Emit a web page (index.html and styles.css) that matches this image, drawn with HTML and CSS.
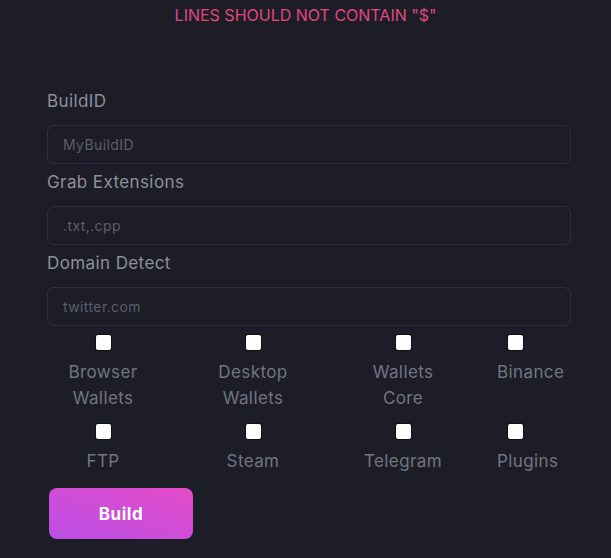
FILE: index.html
```html
<!DOCTYPE html>
<html lang="en">
  <head>
    <meta charset="UTF-8" />
    <title>Builder</title>
    <link rel="stylesheet" href="styles.css">
  </head>
  <body>
    <div class="panel">
      <p class="warn">LINES SHOULD NOT CONTAIN "$"</p>
      <form class="form">
        <label>BuildID</label>
        <input placeholder="MyBuildID" />
        <label>Grab Extensions</label>
        <input placeholder=".txt,.cpp" />
        <label>Domain Detect</label>
        <input placeholder="twitter.com" />

        <div class="checks">
          <div class="opt"><input type="checkbox" /><span>Browser<br>Wallets</span></div>
          <div class="opt"><input type="checkbox" /><span>Desktop<br>Wallets</span></div>
          <div class="opt"><input type="checkbox" /><span>Wallets<br>Core</span></div>
          <div class="opt last"><input type="checkbox" /><span>Binance</span></div>
          <div class="opt"><input type="checkbox" /><span>FTP</span></div>
          <div class="opt"><input type="checkbox" /><span>Steam</span></div>
          <div class="opt"><input type="checkbox" /><span>Telegram</span></div>
          <div class="opt last"><input type="checkbox" /><span>Plugins</span></div>
        </div>

        <button type="button">Build</button>
      </form>
    </div>
  </body>
</html>
```

FILE: styles.css
```css
body {
  margin: 0;
  background: #1d1d27;
  font-family: Inter, "Open Sans", sans-serif;
  color: #8d909b;
}
.panel {
  width: 611px;
  height: 558px;
  overflow: hidden;
}
.warn {
  margin: 4px 0 0;
  text-align: center;
  color: #e0477f;
  font-size: 16px;
  line-height: 22px;
}
.form {
  padding: 64px 40px 0 47px;
  display: flex;
  flex-direction: column;
}
label {
  font-size: 17px;
  letter-spacing: 0.4px;
  line-height: 22px;
  margin-bottom: 13px;
}
.form > input {
  width: 524px;
  height: 39px;
  box-sizing: border-box;
  padding: 0 15px;
  border: 1px solid #2c2f4a;
  border-radius: 7px;
  background: #1d1d27;
  color: #ccc;
  font-family: inherit;
  font-size: 14px;
  letter-spacing: 0.4px;
  margin-bottom: 7px;
}
.form > input::placeholder {
  color: #5b5e6c;
}
.checks {
  display: grid;
  grid-template-columns: 150px 150px 150px 100px;
  margin-left: -19px;
  margin-top: -4px;
}
.opt {
  display: flex;
  flex-direction: column;
  align-items: center;
  color: #717582;
  font-size: 17px;
  letter-spacing: 0.4px;
  line-height: 26px;
  text-align: center;
}
.opt.last {
  align-items: flex-start;
  padding-left: 19px;
}
.opt.last input {
  margin-left: 11px;
}
.opt input {
  appearance: none;
  width: 15px;
  height: 15px;
  margin: 6px 0 9px;
  background: #fff;
  border-radius: 2px;
  box-shadow: 0 0 0 1px #111;
}
.opt span {
  display: block;
  margin-bottom: 7px;
}
button {
  width: 144px;
  height: 51px;
  margin-top: 7px;
  margin-left: 2px;
  border: none;
  border-radius: 8px;
  background: linear-gradient(to top right, #bb4fe6, #e34bc8);
  color: #fff;
  font-family: inherit;
  font-weight: 700;
  font-size: 17px;
  letter-spacing: 0.5px;
  cursor: pointer;
}
```
